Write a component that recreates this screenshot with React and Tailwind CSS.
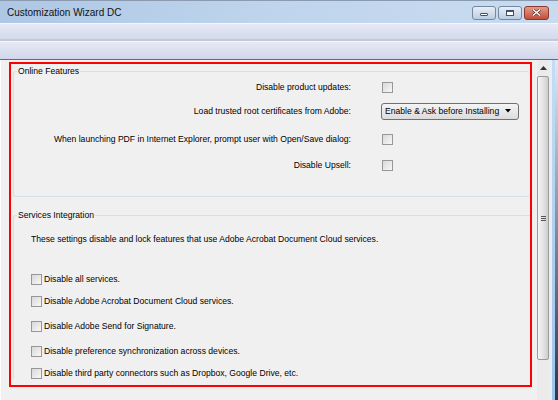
import { useState } from 'react'

const FONT = { fontFamily: '"Liberation Sans", Arial, sans-serif' }

function Check({ checked, onChange }) {
  return (
    <button
      type="button"
      onClick={onChange}
      className="w-[11px] h-[11px] shrink-0 border border-[#979797] bg-gradient-to-br from-[#d9d9d9] to-[#f7f7f7] flex items-center justify-center p-0"
    >
      {checked && <span className="text-[9px] leading-none text-[#1e395b]">✓</span>}
    </button>
  )
}

function SettingRow({ label, children, className }) {
  return (
    <div className={`flex items-center h-[20px] ${className}`}>
      <div className="w-[337px] text-right whitespace-nowrap">{label}</div>
      <div className="ml-[31px] flex items-center">{children}</div>
    </div>
  )
}

function ServiceItem({ label, className, checked, onChange }) {
  return (
    <div className={`flex items-center h-[12px] ${className}`}>
      <Check checked={checked} onChange={onChange} />
      <span className="ml-[2px] whitespace-nowrap">{label}</span>
    </div>
  )
}

const SERVICES = [
  { label: 'Disable all services.', mt: 'mt-[28px]' },
  { label: 'Disable Adobe Acrobat Document Cloud services.', mt: 'mt-[10px]' },
  { label: 'Disable Adobe Send for Signature.', mt: 'mt-[13px]' },
  { label: 'Disable preference synchronization across devices.', mt: 'mt-[13px]' },
  { label: 'Disable third party connectors such as Dropbox, Google Drive, etc.', mt: 'mt-[10px]' },
]

export default function App() {
  const [checks, setChecks] = useState({})
  const toggle = (k) => setChecks((c) => ({ ...c, [k]: !c[k] }))

  return (
    <div className="w-[558px] h-[400px] overflow-hidden flex flex-col bg-[#f0f0f0] text-[#000]" style={FONT}>
      {/* title bar */}
      <div className="h-[23px] shrink-0 flex items-center justify-between border-t border-[#8a9bb0] bg-gradient-to-r from-[#aec7e4] via-[#bfd5ed] to-[#c8dbf0]">
        <span className="ml-[7px] text-[10px] text-[#111]">Customization Wizard DC</span>
        <div className="flex items-center gap-[2px] mr-[9px] mt-[1px]">
          <div className="w-[24px] h-[14px] rounded-[3px] border border-[#7687a0] bg-gradient-to-b from-[#e8eef6] to-[#bccde2] flex items-center justify-center">
            <div className="w-[8px] h-[3px] rounded-[1px] border border-[#3d5272] bg-white mt-[3px]" />
          </div>
          <div className="w-[24px] h-[14px] rounded-[3px] border border-[#7687a0] bg-gradient-to-b from-[#e8eef6] to-[#bccde2] flex items-center justify-center">
            <div className="w-[8px] h-[6px] border border-[#3d5272] border-t-2 bg-white" />
          </div>
          <div className="w-[25px] h-[14px] rounded-[3px] border border-[#8a3a2e] bg-gradient-to-b from-[#e39a88] to-[#c24e3c] flex items-center justify-center">
            <svg width="9" height="7" viewBox="0 0 9 7">
              <path d="M1 0.5 L8 6.5 M8 0.5 L1 6.5" stroke="#4a231c" strokeWidth="2.6" />
              <path d="M1 0.5 L8 6.5 M8 0.5 L1 6.5" stroke="#ffffff" strokeWidth="1.5" />
            </svg>
          </div>
        </div>
      </div>

      {/* toolbar bands */}
      <div className="h-[16px] shrink-0 border-t border-[#f4f6fb] bg-gradient-to-b from-[#e6e9f5] to-[#d4daec]" />
      <div className="h-[2px] shrink-0 bg-[#c4c9d6]" />
      <div className="h-[18px] shrink-0 border-t border-[#f4f6fb] bg-gradient-to-b from-[#e6e9f5] to-[#d1d7ea]" />
      <div className="h-[1px] shrink-0 bg-[#6a6a6a]" />

      {/* client area */}
      <div className="flex-1 flex min-h-0">
        <div className="flex-1 pl-[8px] pt-[2px] text-[8.6px] leading-[11px] border-l border-white">
          <div className="w-[523px] h-[325px] border-2 border-[#ff0000] overflow-hidden">
            <fieldset className="ml-[2px] mt-[2px] border border-r-0 border-[#d5dfe5] rounded-[3px] pb-[21px]">
              <legend className="ml-[3px] px-[1px]">Online Features</legend>
              <SettingRow label="Disable product updates:">
                <Check checked={checks.a} onChange={() => toggle('a')} />
              </SettingRow>
              <SettingRow label="Load trusted root certificates from Adobe:" className="mt-[4px]">
                <div className="-ml-[1px] w-[138px] h-[17px] rounded-[3px] border border-[#707070] bg-gradient-to-b from-[#f4f4f4] to-[#dcdcdc] flex items-center justify-between pl-[3px] pr-[7px]">
                  <span className="whitespace-nowrap">Enable &amp; Ask before Installing</span>
                  <svg width="6" height="4" viewBox="0 0 6 4">
                    <path d="M0 0 H6 L3 3.5 Z" fill="#000" />
                  </svg>
                </div>
              </SettingRow>
              <SettingRow
                label="When launching PDF in Internet Explorer, prompt user with Open/Save dialog:"
                className="mt-[8px]"
              >
                <Check checked={checks.b} onChange={() => toggle('b')} />
              </SettingRow>
              <SettingRow label="Disable Upsell:" className="mt-[6px]">
                <Check checked={checks.c} onChange={() => toggle('c')} />
              </SettingRow>
            </fieldset>

            <fieldset className="ml-[2px] mt-[13px] border border-r-0 border-b-0 border-[#d5dfe5] rounded-tl-[3px] pl-[17px]">
              <legend className="ml-[-14px] px-[1px]">Services Integration</legend>
              <div className="mt-[12px] h-[12px] flex items-center whitespace-nowrap">
                These settings disable and lock features that use Adobe Acrobat Document Cloud services.
              </div>
              {SERVICES.map((s, i) => (
                <ServiceItem
                  key={s.label}
                  label={s.label}
                  className={s.mt}
                  checked={checks['s' + i]}
                  onChange={() => toggle('s' + i)}
                />
              ))}
            </fieldset>
          </div>
        </div>

        {/* scrollbar */}
        <div className="w-[12px] shrink-0 flex flex-col bg-[#ebebeb]">
          <div className="h-[16px] flex items-center justify-center">
            <svg width="7" height="4" viewBox="0 0 7 4">
              <path d="M0 4 L3.5 0 L7 4 Z" fill="#333" />
            </svg>
          </div>
          <div className="h-[284px] rounded-[2px] border border-[#9b9b9b] bg-gradient-to-r from-[#f6f6f6] via-[#e4e4e4] to-[#cdcdcd] flex items-center justify-center">
            <div className="flex flex-col gap-[1px]">
              <div className="w-[5px] h-[1px] bg-[#555]" />
              <div className="w-[5px] h-[1px] bg-[#555]" />
              <div className="w-[5px] h-[1px] bg-[#555]" />
            </div>
          </div>
        </div>

        {/* window frame */}
        <div className="w-[3px] shrink-0 bg-[#e9eef5]" />
        <div className="w-[3px] shrink-0 bg-gradient-to-b from-[#c5dcf3] to-[#9fc4ea]" />
        <div className="w-[3px] shrink-0 bg-gradient-to-b from-[#dfeaf6] to-[#243a55]" />
      </div>
    </div>
  )
}
